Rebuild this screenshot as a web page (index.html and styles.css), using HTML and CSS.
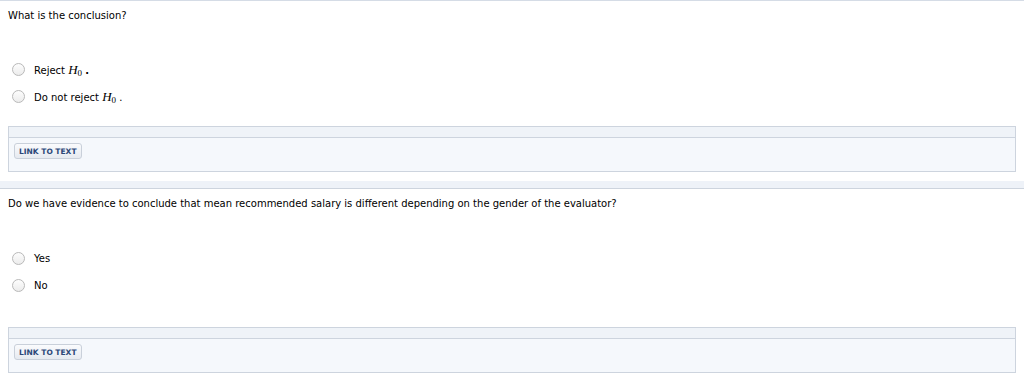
FILE: index.html
```html
<!DOCTYPE html>
<html lang="en">

<head>
    <meta charset="UTF-8" />
    <title>Question</title>
    <link rel="stylesheet" href="styles.css">
</head>

<body>

    <div class="question first">
        <p class="prompt">What is the conclusion?</p>
        <ul class="choices">
            <li><span class="radio"></span><span>Reject <i class="math">H<sub>0</sub></i> <b class="dot">.</b></span></li>
            <li><span class="radio"></span><span>Do not reject <i class="math">H<sub>0</sub></i> .</span></li>
        </ul>
        <div class="help">
            <div class="help-head"></div>
            <div class="help-body"><button class="link-btn">LINK TO TEXT</button></div>
        </div>
    </div>

    <div class="divider"></div>

    <div class="question second">
        <p class="prompt">Do we have evidence to conclude that mean recommended salary is different depending on the gender of the evaluator?</p>
        <ul class="choices">
            <li><span class="radio"></span><span>Yes</span></li>
            <li><span class="radio"></span><span>No</span></li>
        </ul>
        <div class="help">
            <div class="help-head"></div>
            <div class="help-body"><button class="link-btn">LINK TO TEXT</button></div>
        </div>
    </div>

</body>

</html>
```

FILE: styles.css
```css
* {
    box-sizing: border-box;
    margin: 0;
    padding: 0;
}

body {
    font-family: "DejaVu Sans", Verdana, sans-serif;
    font-size: 10px;
    color: #000;
    background: #fff;
}

.question {
    padding: 0 8px;
}

.question.first {
    border-top: 1px solid #d5dce6;
}

.prompt {
    padding-top: 8px;
    line-height: 13px;
}

.choices {
    list-style: none;
    padding: 34px 0 0 4px;
}

.second .choices {
    padding-top: 35px;
}

.choices li {
    display: flex;
    align-items: center;
    gap: 9px;
    height: 27px;
}

.radio {
    width: 13px;
    height: 13px;
    border-radius: 50%;
    border: 1px solid #b9b9b9;
    background: linear-gradient(#fdfdfd, #ececec);
}

.math {
    font-family: "Liberation Serif", "Times New Roman", serif;
    font-size: 13px;
}

.math sub {
    font-size: 9px;
    font-style: normal;
    vertical-align: -2px;
}

.dot {
    font-weight: bold;
}

.help {
    margin-top: 16px;
    border: 1px solid #cdd4de;
    background: #f5f8fc;
}

.second .help {
    margin-top: 28px;
}

.help-head {
    height: 11px;
    background: #eff3f8;
    border-bottom: 1px solid #cdd4de;
}

.help-body {
    height: 33px;
    padding: 5px 5px;
}

.link-btn {
    font-family: "DejaVu Sans", Verdana, sans-serif;
    font-size: 7.5px;
    font-weight: bold;
    color: #2c4878;
    padding: 0 4px;
    height: 16px;
    border: 1px solid #c9d0da;
    border-radius: 3px;
    background: linear-gradient(#fafbfd, #e6eaf0);
}

.divider {
    margin-top: 9px;
    height: 8px;
    background: #eef2f8;
    border-bottom: 1px solid #cdd4de;
}
```
